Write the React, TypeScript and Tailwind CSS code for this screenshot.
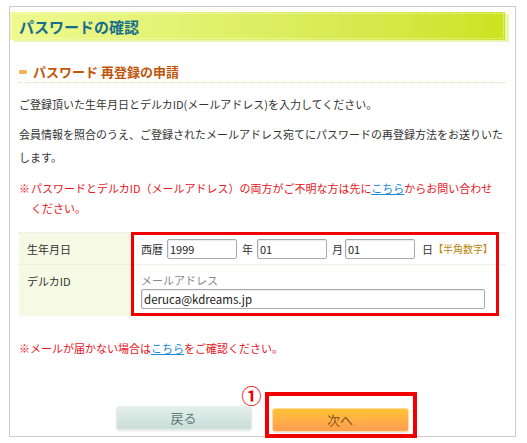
export default function App() {
  return (
    <div className="w-[527px] h-[443px] bg-white pt-[6px] pl-[9px] text-[#333] [font-family:'Noto_Sans_CJK_JP','Noto_Sans',sans-serif]">
      <div className="w-[507px] h-[431px] border border-[#cccccc] pl-[9px] pr-[10px]">
        {/* title bar */}
        <div className="-ml-[9px] mt-[5px] h-[28px] w-[495px] bg-gradient-to-r from-[#eefa8e] to-[#cce31c] shadow-[4px_2px_0_#eaf6b0] outline-1 outline-dotted -outline-offset-2 outline-white/70 flex items-center pl-[9px]">
          <h1 className="text-[15px] font-bold text-[#176d8e] leading-none">パスワードの確認</h1>
        </div>

        {/* section heading */}
        <div className="mt-[22px] h-[21px] flex items-center border-b border-dotted border-[#ecdca0]">
          <span className="w-[8px] h-[4px] rounded-[1px] bg-[#f6b45a]" />
          <h2 className="ml-[6px] text-[13px] font-bold text-[#bf560c] leading-[20px]">パスワード 再登録の申請</h2>
        </div>

        <p className="mt-[11px] text-[11px] leading-[20px]">
          ご登録頂いた生年月日とデルカID(メールアドレス)を入力してください。
        </p>
        <p className="mt-[9px] text-[11px] leading-[23px]">
          会員情報を照合のうえ、ご登録されたメールアドレス宛てにパスワードの再登録方法をお送りいたします。
        </p>
        <div className="mt-[9px] flex text-[11px] leading-[20px] text-[#e8141c]">
          <span className="w-[12px] shrink-0">※</span>
          <p>
            パスワードとデルカID（メールアドレス）の両方がご不明な方は先に
            <a className="text-[#1a8ad4] underline">こちら</a>
            からお問い合わせ
            <br />
            ください。
          </p>
        </div>

        {/* form table */}
        <div className="mt-[14px] w-[486px] text-[11px] border-t border-dotted border-[#e4e4d8]">
          <div className="flex">
            <div className="w-[112px] shrink-0 bg-[#f6f9e4] pt-[6px] leading-[20px]">
              <div className="h-[26px] pl-[8px] border-b border-dotted border-[#e4e4d8]">生年月日</div>
              <div className="pl-[8px] pt-[6px] h-[51px]">デルカID</div>
            </div>
            <div className="relative flex-1">
              <div className="h-[32px] pt-[6px] pl-[10px] flex items-start leading-[20px] border-b border-dotted border-[#e4e4d8]">
                <span>西暦</span>
                <input
                  defaultValue="1999"
                  className="ml-[4px] w-[70px] h-[20px] border border-[#a9a9b0] rounded-[2px] px-[2px] text-[11px] text-[#222] shadow-[inset_1px_1px_1px_rgba(0,0,0,0.08)]"
                />
                <span className="ml-[5px]">年</span>
                <input
                  defaultValue="01"
                  className="ml-[4px] w-[70px] h-[20px] border border-[#a9a9b0] rounded-[2px] px-[2px] text-[11px] text-[#222] shadow-[inset_1px_1px_1px_rgba(0,0,0,0.08)]"
                />
                <span className="ml-[5px]">月</span>
                <input
                  defaultValue="01"
                  className="ml-[2px] w-[70px] h-[20px] border border-[#a9a9b0] rounded-[2px] px-[2px] text-[11px] text-[#222] shadow-[inset_1px_1px_1px_rgba(0,0,0,0.08)]"
                />
                <span className="ml-[7px]">日</span>
                <span className="ml-[5px] text-[10px] text-[#b8860b] [font-feature-settings:'palt']">【半角数字】</span>
              </div>
              <div className="h-[51px] pt-[6px] pl-[10px] border-b border-dotted border-[#e4e4d8]">
                <div className="leading-[18px] text-[#888]">メールアドレス</div>
                <input
                  defaultValue="deruca@kdreams.jp"
                  className="w-[344px] h-[20px] border border-[#a9a9b0] rounded-[2px] px-[2px] text-[11.5px] text-[#222] shadow-[inset_1px_1px_1px_rgba(0,0,0,0.08)]"
                />
              </div>
              <div className="absolute left-0 top-[-1px] w-[368px] h-[84px] border-[3px] border-[#f00000] pointer-events-none" />
            </div>
          </div>
        </div>

        <p className="mt-[22px] text-[11px] leading-[20px] text-[#e8141c]">
          ※メールが届かない場合は<a className="text-[#1a8ad4] underline">こちら</a>をご確認ください。
        </p>

        {/* buttons */}
        <div className="mt-[48px] flex justify-center gap-[20px]">
          <button className="w-[136px] h-[24px] rounded-[3px] border border-[#e6efec] bg-gradient-to-b from-[#e3efeb] to-[#c9ded7] shadow-[0_1px_2px_rgba(0,0,0,0.12)] text-[13px] text-[#5b8078]">
            戻る
          </button>
          <div className="relative">
            <button className="w-[137px] h-[24px] rounded-[3px] border border-[#ffdca6] bg-gradient-to-b from-[#ffc332] to-[#ff9c52] shadow-[0_1px_2px_rgba(0,0,0,0.12)] text-[13px] text-[#855514]">
              次へ
            </button>
            <div className="absolute left-[-7px] top-[-14px] w-[152px] h-[46px] border-[4px] border-[#f00000] pointer-events-none" />
            <span className="absolute left-[-30px] top-[-22px] text-[20px] font-bold leading-[24px] text-[#f00000]">①</span>
          </div>
        </div>
      </div>
    </div>
  );
}
